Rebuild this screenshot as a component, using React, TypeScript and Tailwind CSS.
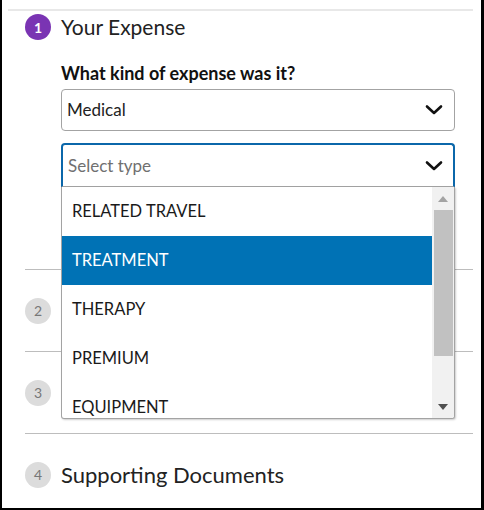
import React from 'react';

const options = ['RELATED TRAVEL', 'TREATMENT', 'THERAPY', 'PREMIUM', 'EQUIPMENT'];

function Chevron() {
    return (
        <svg width="18" height="12" viewBox="0 0 18 12" className="shrink-0">
            <path d="M2 2.5 L9 9 L16 2.5" fill="none" stroke="#111" strokeWidth="2.6" strokeLinecap="round" strokeLinejoin="round" />
        </svg>
    );
}

function Badge({ n, active }: { n: number; active?: boolean }) {
    return (
        <div
            className={
                active
                    ? 'w-[26px] h-[26px] rounded-full bg-[#7a34b3] text-white flex items-center justify-center text-[14px] font-bold shrink-0'
                    : 'w-[26px] h-[26px] rounded-full bg-[#dcdcdc] text-[#777] flex items-center justify-center text-[14px] shrink-0'
            }
        >
            {n}
        </div>
    );
}

// collapsed step; title is covered by the open list for steps 2 and 3
function Step({ n, title }: { n: number; title?: string }) {
    return (
        <div className="h-[82px] border-t border-[#bdbdbd] flex items-center gap-[10px]">
            <Badge n={n} />
            {title && <span className="text-[22px] text-[#222]">{title}</span>}
        </div>
    );
}

export default function App() {
    return (
        <div className="w-[484px] h-[510px] bg-white border-l-2 border-r-[3px] border-b-2 border-black font-['Lato',sans-serif] text-[#222] overflow-hidden">
            <div className="pl-[6px] pt-[9px]">
                <div className="h-[2px] w-[465px] bg-[#e8e8e8]" />
            </div>

            <div className="ml-[23px] w-[448px]">
                {/* Step 1 - open */}
                <div className="pb-[82px]">
                    <div className="mt-[3px] flex items-center gap-[10px]">
                        <Badge n={1} active />
                        <span className="text-[21px] leading-[26px]">Your Expense</span>
                    </div>

                    <div className="ml-[36px] w-[394px]">
                        <label className="block mt-[23px] text-[18px] leading-[20px] font-bold text-[#111]">
                            What kind of expense was it?
                        </label>

                        <div className="mt-[6px] h-[42px] border border-[#a3a3a3] rounded-[4px] flex items-center justify-between pl-[5px] pr-[11px]">
                            <span className="text-[17px] text-[#222]">Medical</span>
                            <Chevron />
                        </div>

                        <div className="relative mt-[12px]">
                            <div className="h-[44px] border-2 border-b border-[#0b67aa] border-b-[#a3a3a3] rounded-t-[4px] flex items-center justify-between pl-[5px] pr-[10px]">
                                <span className="text-[17px] text-[#707070]">Select type</span>
                                <Chevron />
                            </div>

                            {/* open dropdown list */}
                            <div className="absolute left-0 top-full z-10 w-[394px] h-[232px] bg-white border border-t-0 border-[#a3a3a3] rounded-b-[3px] shadow-[1px_1px_2px_rgba(0,0,0,0.2)] flex overflow-hidden">
                                <ul className="flex-1">
                                    {options.map((o) => (
                                        <li
                                            key={o}
                                            className={
                                                o === 'TREATMENT'
                                                    ? 'h-[49px] flex items-center pl-[10px] text-[16.5px] bg-[#0072b5] text-white'
                                                    : 'h-[49px] flex items-center pl-[10px] text-[16.5px] text-[#1a1a1a]'
                                            }
                                        >
                                            {o}
                                        </li>
                                    ))}
                                </ul>
                                <div className="w-[22px] bg-[#f1f1f1] flex flex-col items-center">
                                    <div className="h-[23px] flex items-center justify-center">
                                        <svg width="10" height="6" viewBox="0 0 10 6">
                                            <path d="M0 6 L5 0 L10 6 Z" fill="#a3a3a3" />
                                        </svg>
                                    </div>
                                    <div className="w-[19px] h-[146px] bg-[#c1c1c1]" />
                                    <div className="flex-1" />
                                    <div className="h-[22px] flex items-center justify-center">
                                        <svg width="10" height="6" viewBox="0 0 10 6">
                                            <path d="M0 0 L10 0 L5 6 Z" fill="#505050" />
                                        </svg>
                                    </div>
                                </div>
                            </div>
                        </div>
                    </div>
                </div>

                <Step n={2} />
                <Step n={3} />
                <Step n={4} title="Supporting Documents" />
            </div>
        </div>
    );
}
